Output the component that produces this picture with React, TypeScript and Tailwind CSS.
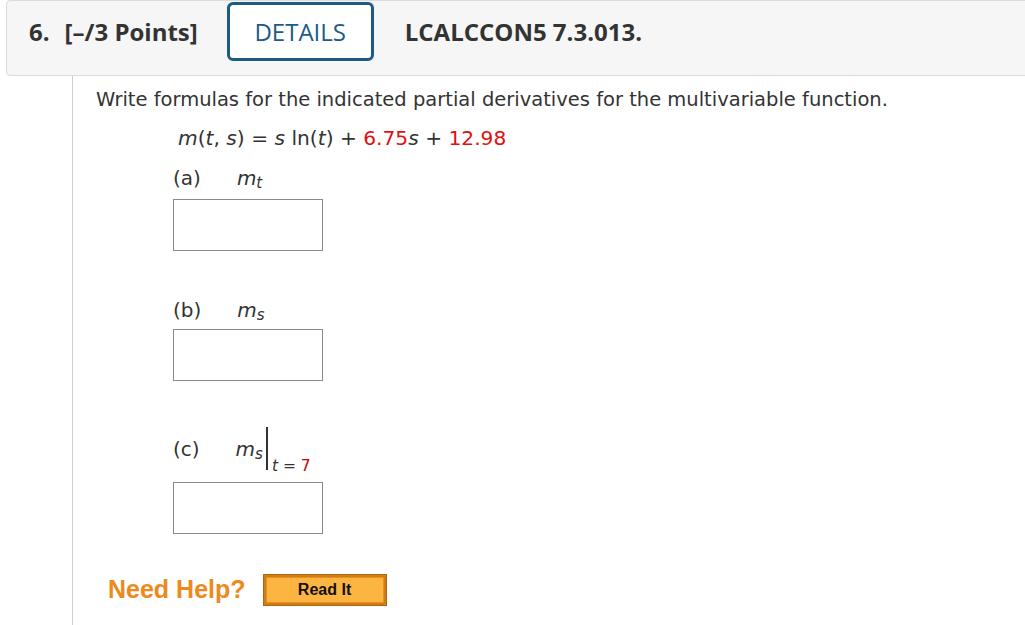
import React from "react";

const verd = { fontFamily: '"DejaVu Sans", Verdana, sans-serif' };

function Box() {
  return <div className="w-[150px] h-[52px] border border-[#8a8a8a] bg-white" />;
}

export default function App() {
  return (
    <div className="w-[1025px] h-[625px] bg-white overflow-hidden relative" style={{ fontFamily: '"Open Sans", sans-serif' }}>
      <div className="ml-[6px] w-[1030px] h-[76px] bg-[#f6f6f6] border border-[#dcdcdc] rounded-[4px] flex items-start">
        <div className="pl-[22px] text-[24px] font-bold text-[#333] flex items-center h-[62px]">
          <span>6.</span>
          <span className="ml-[15px]">[–/3 Points]</span>
        </div>
        <div className="ml-[29px] mt-[1px] w-[147px] h-[59px] border-[3px] border-[#1d5b87] rounded-[6px] bg-white flex items-center justify-center text-[24px] text-[#1d5b87]">
          DETAILS
        </div>
        <div className="ml-[31px] h-[62px] flex items-center text-[24px] font-bold text-[#333]">
          LCALCCON5 7.3.013.
        </div>
      </div>
      <div className="ml-[72px] border-l border-[#cfcfcf] h-[560px] pl-[23px] text-[#333]" style={verd}>
        <div className="pt-[12px] text-[19.5px] leading-[24px]">
          Write formulas for the indicated partial derivatives for the multivariable function.
        </div>
        <div className="ml-[82px] mt-[14px] text-[20.2px] leading-[24px]">
          <i>m</i>(<i>t</i>, <i>s</i>) = <i>s</i> ln(<i>t</i>) + <span className="text-[#e01010]">6.75</span><i>s</i> + <span className="text-[#e01010]">12.98</span>
        </div>
        <div className="ml-[77px] mt-[16px] text-[20px] leading-[24px] flex">
          <span>(a)</span>
          <span className="ml-[36px]"><i>m</i><sub className="text-[15px] relative top-[3px]"><i>t</i></sub></span>
        </div>
        <div className="ml-[77px] mt-[9px]"><Box /></div>
        <div className="ml-[77px] mt-[47px] text-[20px] leading-[24px] flex">
          <span>(b)</span>
          <span className="ml-[36px]"><i>m</i><sub className="text-[15px] relative top-[3px]"><i>s</i></sub></span>
        </div>
        <div className="ml-[77px] mt-[7px]"><Box /></div>
        <div className="ml-[77px] mt-[49px] text-[20px] leading-[24px] flex items-start">
          <span className="mt-[7px]">(c)</span>
          <span className="ml-[36px] flex items-start">
            <span className="mt-[7px]"><i>m</i><sub className="text-[15px] relative top-[3px]"><i>s</i></sub></span>
            <span className="ml-[3px] w-[2px] h-[43px] bg-[#333] -mt-[3px]" />
            <span className="text-[15.5px] mt-[24px] ml-[4px]"><i>t</i> = <span className="text-[#c00]">7</span></span>
          </span>
        </div>
        <div className="ml-[77px] mt-[4px]"><Box /></div>
        <div className="ml-[12px] mt-[37px] flex items-center" style={{ fontFamily: '"Liberation Sans", Arial, sans-serif' }}>
          <span className="text-[25px] font-bold text-[#ec8a1c]">Need Help?</span>
          <div className="ml-[17px] w-[124px] h-[32px] bg-[#d07a18] p-[2px] border border-[#b0650f]">
            <div className="w-full h-full bg-[#fdb541] border border-[#e8901e] flex items-center justify-center text-[16px] font-bold text-[#111]">
              Read It
            </div>
          </div>
        </div>
      </div>
    </div>
  );
}
